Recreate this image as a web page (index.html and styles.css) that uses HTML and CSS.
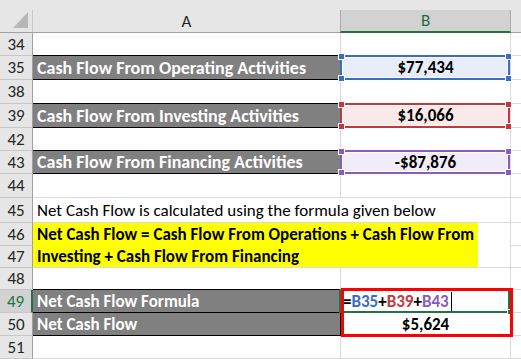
FILE: index.html
```html
<!DOCTYPE html>
<html>
<head>
<meta charset="utf-8">
<link rel="stylesheet" href="styles.css">
</head>
<body>
<div class="sheet">
  <div class="topband"></div>

  <div class="hdr corner"><svg class="tri" width="16" height="17" viewBox="0 0 16 17"><polygon points="15,0 15,16 0,16" fill="#b8b8b8"/></svg></div>
  <div class="hdr colh">A</div>
  <div class="hdr colh sel">B</div>
  <div class="hdr colh last"></div>

  <div class="rh">34</div><div class="c"></div><div class="c"></div><div class="c e"></div>

  <div class="rh">35</div>
  <div class="c dark big">Cash Flow From Operating Activities</div>
  <div class="c val ref blue">$77,434<span class="box"><i class="h tl"></i><i class="h tr"></i><i class="h bl"></i><i class="h br"></i></span></div>
  <div class="c e"></div>

  <div class="rh">38</div><div class="c under"></div><div class="c"></div><div class="c e"></div>

  <div class="rh">39</div>
  <div class="c dark big">Cash Flow From Investing Activities</div>
  <div class="c val ref red">$16,066<span class="box"><i class="h tl"></i><i class="h tr"></i><i class="h bl"></i><i class="h br"></i></span></div>
  <div class="c e"></div>

  <div class="rh">42</div><div class="c under"></div><div class="c"></div><div class="c e"></div>

  <div class="rh">43</div>
  <div class="c dark big">Cash Flow From Financing Activities</div>
  <div class="c val ref purple">-$87,876<span class="box"><i class="h tl"></i><i class="h tr"></i><i class="h bl"></i><i class="h br"></i></span></div>
  <div class="c e"></div>

  <div class="rh">44</div><div class="c"></div><div class="c"></div><div class="c e"></div>

  <div class="rh">45</div>
  <div class="c text over">Net Cash Flow is calculated using the formula given below</div>
  <div class="c"></div>
  <div class="c e"></div>

  <div class="rh">46</div>
  <div class="c merged">
    <div class="yellow">
      <div class="yl l1">Net Cash Flow = Cash Flow From Operations + Cash Flow From</div>
      <div class="yl l2">Investing + Cash Flow From Financing</div>
    </div>
  </div>
  <div class="c e"></div>
  <div class="rh">47</div>
  <div class="c e"></div>

  <div class="rh">48</div><div class="c under"></div><div class="c"></div><div class="c e"></div>

  <div class="rh sel">49</div>
  <div class="c dark">Net Cash Flow Formula</div>
  <div class="c formula"><span class="k">=</span><span class="fb">B35</span><span class="k">+</span><span class="fr">B39</span><span class="k">+</span><span class="fp">B43</span><span class="caret"></span><span class="selbox"></span><span class="fill"></span><span class="redbox"></span></div>
  <div class="c e"></div>

  <div class="rh">50</div>
  <div class="c dark">Net Cash Flow</div>
  <div class="c val">$5,624</div>
  <div class="c e"></div>

  <div class="rh">51</div><div class="c"></div><div class="c"></div><div class="c e"></div>
</div>
</body>
</html>
```
FILE: styles.css
```css
* { box-sizing: border-box; margin: 0; padding: 0; }
body { margin: 0; background: #fff; font-family: Carlito, Lato, "Open Sans", sans-serif; font-size: 17px; color: #000; }

.sheet {
  display: grid;
  grid-template-columns: 33px 308px 170px 10px;
  grid-template-rows: 10px 23px 23px 24px 24px 24px 23px 23px 24px 25px 23px 22px 22px 23px 23px 23px;
  width: 521px;
  height: 359px;
  overflow: hidden;
}

.topband { grid-column: 1 / -1; background: #e6e6e6; }

.hdr {
  background: #e6e6e6;
  border-bottom: 1px solid #a0a0a0;
  display: flex; align-items: center; justify-content: center;
  font-size: 17px; color: #262626;
}
.corner { border-right: 1px solid #c8c8c8; position: relative; }
.tri { position: absolute; right: 3px; bottom: 3px; }
.colh { border-right: 1px solid #c8c8c8; }
.colh.sel { background: #d2d2d2; color: #1e6b3f; border-left: 1px solid #ababab; border-right: 1px solid #ababab; border-bottom: 2px solid #217346; margin-left: -1px; }
.colh.last { border-right: none; }

.rh {
  background: #e6e6e6;
  border-right: 1px solid #a0a0a0;
  border-bottom: 1px solid #c8c8c8;
  display: flex; align-items: center; justify-content: center;
  font-size: 17px; color: #262626;
}
.rh.sel { background: #d2d2d2; color: #217346; border-right: 2px solid #217346; }

.c {
  border-right: 1px solid #dadada;
  border-bottom: 1px solid #dadada;
  display: flex; align-items: center;
  white-space: nowrap;
}
.c.e { border-right: none; }
.c.under { border-bottom-color: #000; }

.dark {
  background: #808080; color: #fff; font-weight: 700;
  padding-left: 4px;
  border-right-color: #000; border-bottom-color: #000;
  box-shadow: 0 -1px 0 #000;
}
.dark.big { font-size: 18px; }

.text { padding-left: 4px; }
.over { border-right-color: transparent; overflow: visible; }

.val { justify-content: center; font-weight: 700; }

.ref { position: relative; }
.ref.blue { background: #e8eef9; }
.ref.red { background: #f9e9e9; }
.ref.purple { background: #f1edf8; }
.box {
  position: absolute; left: -1px; right: 0; top: -1px; bottom: -1px;
  border: 2px solid var(--rc);
  box-shadow: inset 0 0 0 1px #fff;
  z-index: 3;
}
.blue { --rc: #3a6dc6; }
.red { --rc: #c1393d; }
.purple { --rc: #8a5cc0; }
.h { position: absolute; width: 7px; height: 7px; background: var(--rc); border: 1px solid #fff; }
.h.tl { left: -4px; top: -4px; }
.h.tr { right: -4px; top: -4px; }
.h.bl { left: -4px; bottom: -4px; }
.h.br { right: -4px; bottom: -4px; }

.merged { grid-column: 2 / 4; grid-row: span 2; align-items: stretch; border-right: 1px solid #dadada; }
.yellow { width: 445px; background: #ffff00; font-weight: 700; padding-left: 4px; display: flex; flex-direction: column; }
.yl { display: flex; align-items: center; }
.yl.l1 { height: 23px; }
.yl.l2 { height: 22px; }

.formula { position: relative; padding-left: 2px; font-weight: 700; }
.k { color: #000; }
.fb { color: #3a6dc6; }
.fr { color: #c8393d; }
.fp { color: #8a5cc0; }
.caret { display: inline-block; width: 1px; height: 19px; background: #000; margin-left: 2px; }
.selbox { position: absolute; left: -2px; top: -1px; width: 171px; height: 24px; border: 2px solid #217346; z-index: 4; }
.fill { position: absolute; right: -3px; bottom: -3px; width: 6px; height: 6px; background: #217346; border: 1px solid #fff; z-index: 4; }
.redbox { position: absolute; left: 0; top: -2px; width: 172px; height: 49px; border: 3px solid #ff0000; z-index: 5; }
```
